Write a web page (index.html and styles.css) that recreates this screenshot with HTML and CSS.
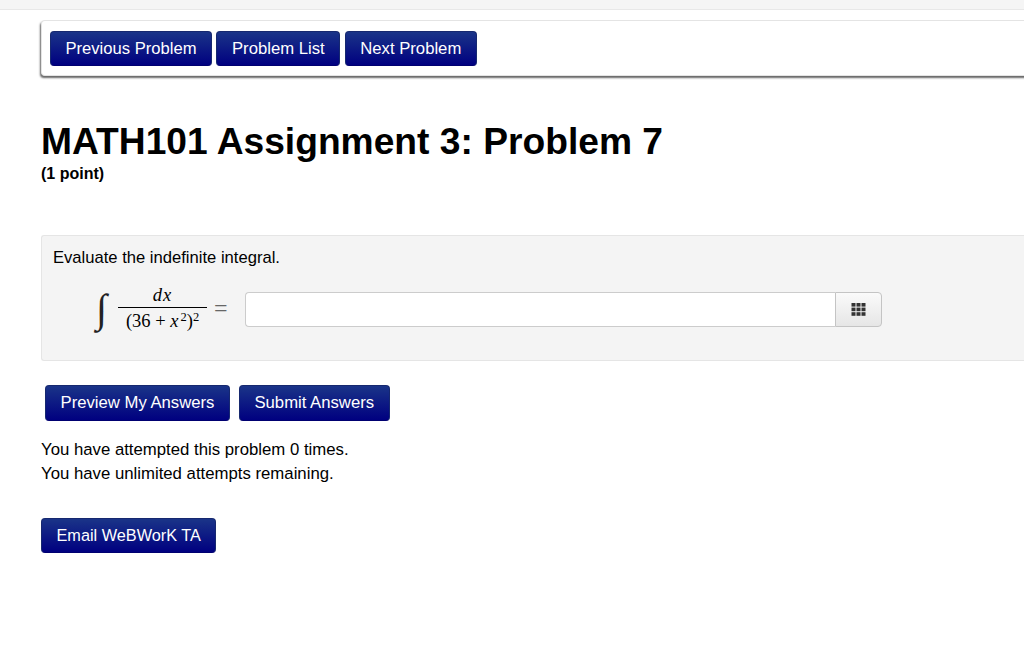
FILE: index.html
```html
<!DOCTYPE html>
<html lang="en">
<head>
<meta charset="utf-8">
<title>MATH101 Assignment 3: Problem 7</title>
<link rel="stylesheet" href="styles.css">
</head>
<body>
<div class="topstrip"></div>
<main class="page">
  <nav class="navbar">
    <a class="btn btn-first">Previous Problem</a>
    <a class="btn">Problem List</a>
    <a class="btn">Next Problem</a>
  </nav>
  <h1 class="title">MATH101 Assignment 3: Problem 7</h1>
  <div class="points">(1 point)</div>
  <section class="well">
    <p class="prompt">Evaluate the indefinite integral.</p>
    <div class="equation">
      <span class="integral">∫</span>
      <span class="fraction">
        <span class="num"><i>dx</i></span>
        <span class="den">(36 + <i class="var">x</i><sup>2</sup>)<sup>2</sup></span>
      </span>
      <span class="equals">=</span>
      <span class="answer">
        <input class="answer-input" type="text" aria-label="Answer">
        <span class="palette">
          <svg width="15" height="15" viewBox="0 0 15 15" aria-hidden="true">
            <g fill="#333">
              <rect x="0.5" y="1" width="4" height="3.6"/><rect x="5.5" y="1" width="4" height="3.6"/><rect x="10.5" y="1" width="4" height="3.6"/>
              <rect x="0.5" y="5.6" width="4" height="3.6"/><rect x="5.5" y="5.6" width="4" height="3.6"/><rect x="10.5" y="5.6" width="4" height="3.6"/>
              <rect x="0.5" y="10.2" width="4" height="3.6"/><rect x="5.5" y="10.2" width="4" height="3.6"/><rect x="10.5" y="10.2" width="4" height="3.6"/>
            </g>
          </svg>
        </span>
      </span>
    </div>
  </section>
  <div class="actions">
    <a class="btn">Preview My Answers</a>
    <a class="btn">Submit Answers</a>
  </div>
  <p class="attempts">You have attempted this problem 0 times.<br>You have unlimited attempts remaining.</p>
  <a class="btn email">Email WeBWorK TA</a>
</main>
</body>
</html>
```
FILE: styles.css
```css
html, body {
  margin: 0;
  height: 100%;
  overflow: hidden;
  background: #fff;
  color: #000;
  font-family: "Liberation Sans", Arial, sans-serif;
  font-size: 16px;
}
.topstrip {
  height: 9px;
  background: #f5f5f5;
  border-bottom: 1px solid #e8e8e8;
}
.page {
  padding-left: 41px;
  width: 1020px;
  box-sizing: border-box;
  margin-top: 10px;
}
.navbar {
  display: flex;
  gap: 4.5px;
  box-sizing: border-box;
  height: 56px;
  padding: 10px 8px;
  background: #fff;
  border: 1px solid #e4e4e4;
  border-right: 0;
  border-radius: 4px 0 0 4px;
  box-shadow: -1px 2px 2px rgba(0, 0, 0, 0.6);
  width: 1000px;
}
.btn {
  display: inline-block;
  box-sizing: border-box;
  height: 35px;
  line-height: 33px;
  padding: 0 14.5px;
  color: #fff;
  font-size: 16.7px;
  white-space: nowrap;
  background: linear-gradient(#1a3488, #000080);
  border-radius: 4px;
  border: 1px solid #16286f;
  border-bottom-color: #000070;
}
.btn-first {
  font-size: 16.6px;
}
.title {
  margin: 44px 0 0;
  font-size: 37.2px;
  line-height: 42px;
  font-weight: 700;
}
.points {
  margin-top: 3px;
  font-size: 16px;
  line-height: 18px;
  font-weight: 700;
}
.well {
  box-sizing: border-box;
  margin-top: 52px;
  height: 126px;
  width: 1000px;
  padding: 12px 11px;
  background: #f4f4f4;
  border: 1px solid #e5e5e5;
  border-right: 0;
  border-radius: 3px 0 0 3px;
}
.prompt {
  margin: 0;
  font-size: 16.6px;
  line-height: 20px;
}
.equation {
  display: flex;
  align-items: center;
  margin-top: 16px;
  padding-left: 39px;
  height: 50px;
  font-family: "Liberation Serif", "Times New Roman", serif;
}
.integral {
  font-family: "Liberation Serif", serif;
  font-size: 40px;
  line-height: 48px;
  width: 26px;
  padding-left: 4px;
  box-sizing: border-box;
  font-weight: 400;
  color: #222;
}
.fraction {
  display: inline-flex;
  flex-direction: column;
  align-items: center;
  width: 89px;
  font-size: 18.5px;
}
.num {
  display: block;
  width: 100%;
  text-align: center;
  line-height: 21px;
  padding-bottom: 1px;
  letter-spacing: 1px;
  border-bottom: 1px solid #000;
}
.den {
  display: block;
  line-height: 26px;
  white-space: nowrap;
}
.den sup {
  font-size: 12.5px;
  line-height: 0;
  vertical-align: 6px;
}
.var {
  margin-right: 2px;
}
.equals {
  margin-left: 7px;
  padding-bottom: 3px;
  width: 31px;
  color: #666;
  font-size: 24px;
  line-height: 24px;
}
.answer {
  display: flex;
  height: 35px;
}
.answer-input {
  box-sizing: border-box;
  width: 590px;
  height: 35px;
  margin: 0;
  background: #fff;
  border: 1px solid #ccc;
  border-right: 0;
  border-radius: 4px 0 0 4px;
  outline: 0;
}
.palette {
  box-sizing: border-box;
  display: flex;
  align-items: center;
  justify-content: center;
  width: 47px;
  height: 35px;
  background: linear-gradient(#fafafa, #e6e6e6);
  border: 1px solid #c4c4c4;
  border-radius: 0 4px 4px 0;
}
.actions {
  display: flex;
  gap: 9px;
  margin: 24px 0 0 4px;
}
.actions .btn {
  height: 36px;
  line-height: 34px;
}
.attempts {
  margin: 17px 0 0;
  font-size: 16.75px;
  line-height: 24px;
}
.email {
  margin-top: 32px;
  font-size: 16.3px;
}
```
